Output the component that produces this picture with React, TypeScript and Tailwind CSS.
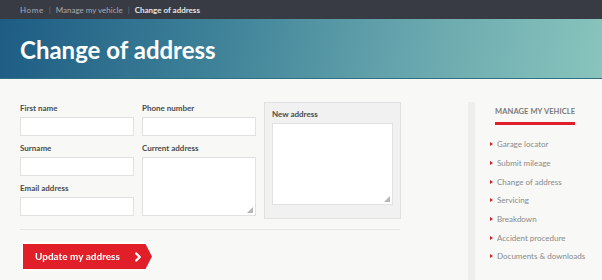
import { ChevronRight } from "lucide-react";

const sideLinks = [
  "Garage locator",
  "Submit mileage",
  "Change of address",
  "Servicing",
  "Breakdown",
  "Accident procedure",
  "Documents & downloads",
];

function Grip() {
  return (
    <span className="absolute right-[2px] bottom-[2px] w-[6px] h-[6px] bg-[#b5b5b5] [clip-path:polygon(100%_0,100%_100%,0_100%)]" />
  );
}

function Field({ label, tall }: { label: string; tall?: boolean }) {
  return (
    <div className="flex flex-col">
      <label className="text-[8px] leading-[10px] font-bold text-[#4a4a4a] mb-[4px]">{label}</label>
      {tall ? (
        <div className="relative h-[59px] bg-white border border-[#dfe2df]">
          <Grip />
        </div>
      ) : (
        <div className="h-[19px] bg-white border border-[#dfe2df]" />
      )}
    </div>
  );
}

export default function App() {
  return (
    <div className="w-[602px] h-[280px] overflow-hidden bg-[#f8f8f6] font-['Lato','Liberation_Sans',sans-serif]">
      {/* breadcrumb */}
      <div className="h-[19px] bg-[#383b44] flex items-center pl-[20px] gap-[5px] text-[8px] text-[#a9acb2]">
        <span className="tracking-[0.6px]">Home</span>
        <span className="text-[#6c6f76]">|</span>
        <span>Manage my vehicle</span>
        <span className="text-[#6c6f76]">|</span>
        <span className="text-[#e4e5e7] font-bold">Change of address</span>
      </div>

      {/* banner */}
      <div className="h-[60px] bg-[linear-gradient(100deg,#1e5c84_0%,#3d8198_35%,#64a3ac_65%,#89c5bd_100%)] border-b border-[#2f6f82] flex items-center pl-[20px] pt-[2px]">
        <h1 className="text-[24px] font-bold text-white">Change of address</h1>
      </div>

      <div className="flex">
        {/* form */}
        <div className="w-[468px] pl-[20px] pt-[23px]">
          <div className="flex gap-[8px]">
            <div className="w-[114px] pt-[1px] flex flex-col gap-[7px]">
              <Field label="First name" />
              <Field label="Surname" />
              <Field label="Email address" />
            </div>
            <div className="w-[114px] pt-[1px] flex flex-col gap-[7px]">
              <Field label="Phone number" />
              <Field label="Current address" tall />
            </div>
            <div className="w-[137px] h-[117px] bg-[#f1f1f1] border border-[#e0e0e0] px-[7px] pt-[6px]">
              <label className="block text-[8px] leading-[10px] font-bold text-[#4a4a4a] mb-[4px]">New address</label>
              <div className="relative h-[82px] bg-white border border-[#dfe2df]">
                <Grip />
              </div>
            </div>
          </div>

          <div className="w-[380px] h-px bg-[#e6e6e4] mt-[10px]" />

          <div className="mt-[12px] ml-[2px] w-[132px] h-[29px] bg-white [clip-path:polygon(0_0,94%_0,100%_50%,94%_100%,0_100%)] drop-shadow-[0_1px_1px_rgba(0,0,0,0.2)] flex items-center">
            <button className="ml-[1px] w-[129px] h-[25px] bg-[#e01f29] [clip-path:polygon(0_0,95%_0,100%_50%,95%_100%,0_100%)] flex items-center justify-between pl-[12px] pr-[7px] text-white text-[10px] font-bold">
              <span>Update my address</span>
              <ChevronRight className="w-[14px] h-[14px]" strokeWidth={4} />
            </button>
          </div>
        </div>

        {/* sidebar */}
        <div className="flex pt-[23px]">
          <div className="w-[7px] h-[200px] bg-[#eeeeee]" />
          <div className="pl-[20px] pt-[5px]">
            <div className="text-[7.5px] leading-[10px] font-bold text-[#7a7a7a] tracking-[0.1px]">MANAGE MY VEHICLE</div>
            <div className="w-[80px] h-[3px] bg-[#e01f29] mt-[5px]" />
            <ul className="mt-[10px] -ml-[5px]">
              {sideLinks.map((l) => (
                <li key={l} className="flex items-center gap-[4px] h-[18.7px] text-[8px] text-[#8a8a8a]">
                  <span className="w-0 h-0 border-y-[2px] border-y-transparent border-l-[3px] border-l-[#d0202a]" />
                  <span>{l}</span>
                </li>
              ))}
            </ul>
          </div>
        </div>
      </div>
    </div>
  );
}
